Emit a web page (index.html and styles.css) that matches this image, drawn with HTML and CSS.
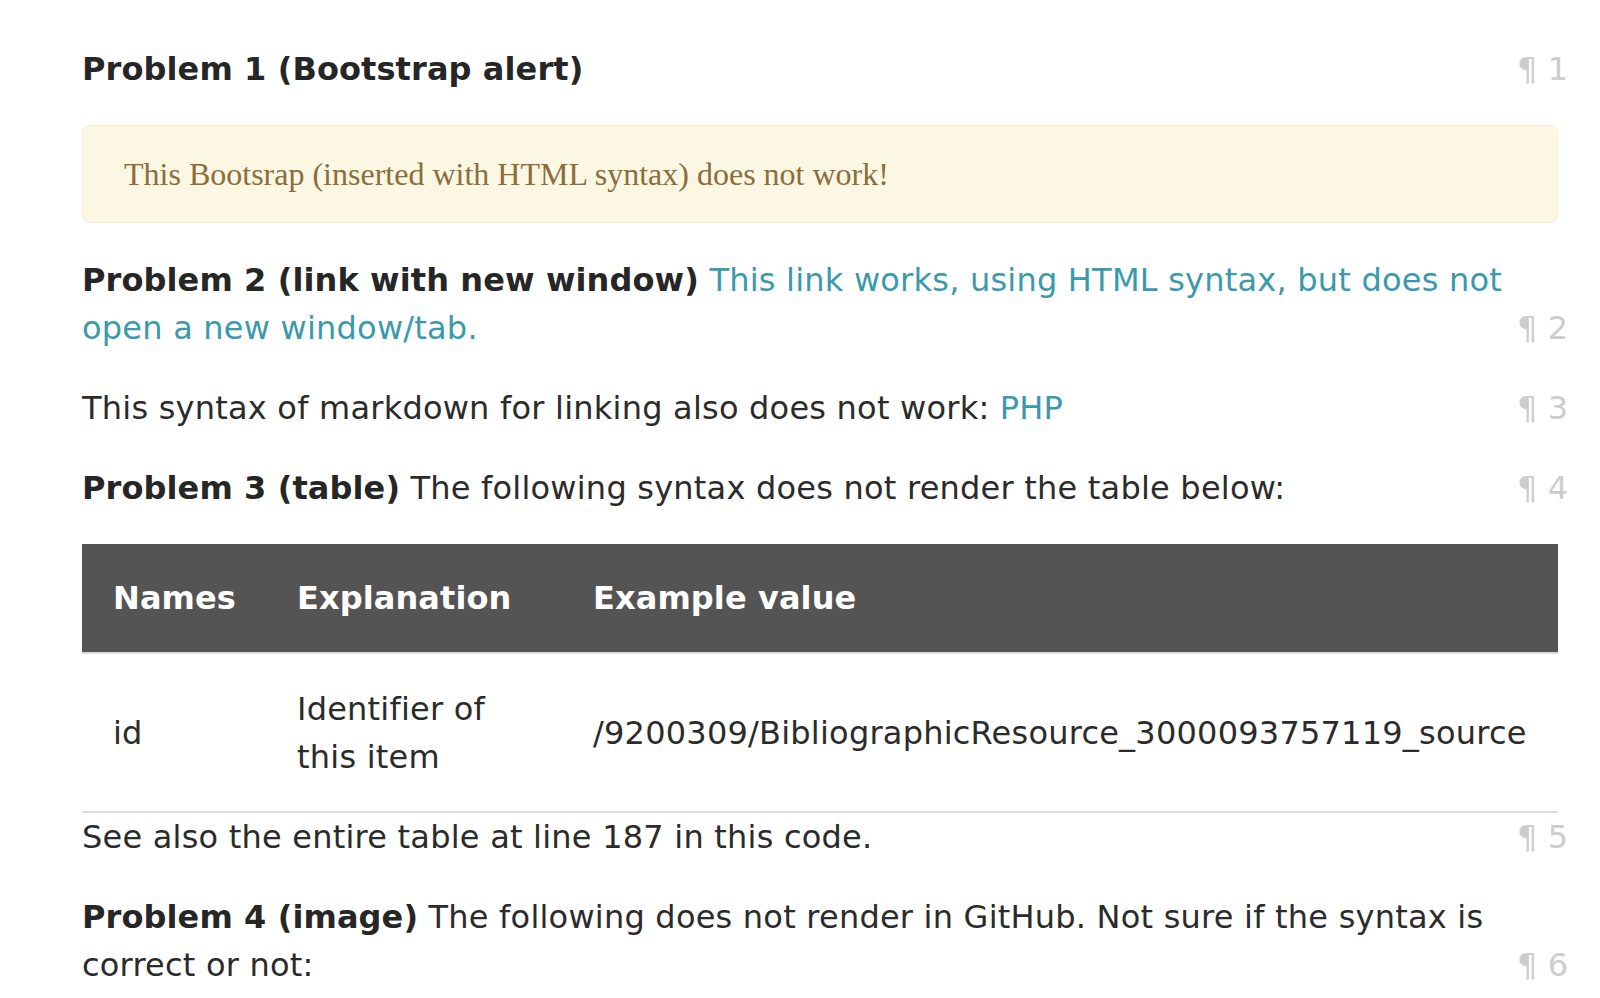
FILE: index.html
```html
<!DOCTYPE html>
<html lang="en">
<head>
  <meta charset="UTF-8">
  <meta name="viewport" content="width=device-width, initial-scale=1.0">
  <title>Problems</title>
  <link rel="stylesheet" href="styles.css">
</head>
<body>
  <div class="conteudo">
    <p class="par"><strong>Problem 1 (Bootstrap alert)</strong><span class="pilcrow">¶ 1</span></p>

    <div class="alerta">This Bootsrap (inserted with HTML syntax) does not work!</div>

    <p class="par"><strong>Problem 2 (link with new window)</strong> <a href="#">This link works, using HTML syntax, but does not open a new window/tab.</a><span class="pilcrow">¶ 2</span></p>

    <p class="par">This syntax of markdown for linking also does not work: <a href="#">PHP</a><span class="pilcrow">¶ 3</span></p>

    <p class="par"><strong>Problem 3 (table)</strong> The following syntax does not render the table below:<span class="pilcrow">¶ 4</span></p>

    <!-- Tabela -->
    <table class="tabela">
      <colgroup>
        <col class="col-nome">
        <col class="col-expl">
        <col>
      </colgroup>
      <thead>
        <tr>
          <th>Names</th>
          <th>Explanation</th>
          <th>Example value</th>
        </tr>
      </thead>
      <tbody>
        <tr>
          <td>id</td>
          <td>Identifier of this item</td>
          <td>/9200309/BibliographicResource_3000093757119_source</td>
        </tr>
      </tbody>
    </table>

    <p class="par">See also the entire table at line 187 in this code.<span class="pilcrow">¶ 5</span></p>

    <p class="par"><strong>Problem 4 (image)</strong> The following does not render in GitHub. Not sure if the syntax is correct or not:<span class="pilcrow">¶ 6</span></p>
  </div>
</body>
</html>
```

FILE: styles.css
```css
body {
  margin: 0;
  background-color: white;
  color: #2b2b2b;
  font-family: "DejaVu Sans", Verdana, sans-serif;
  font-size: 32px;
  line-height: 48px;
  letter-spacing: 0.22px;
}
.conteudo {
  width: 1476px;
  padding: 45px 0 0 82px;
}
.par {
  position: relative;
  margin: 0 0 32px 0;
}
.par strong {
  color: #262626;
  letter-spacing: 0.1px;
}
.par a {
  color: #3a9aab;
  text-decoration: none;
}
.pilcrow {
  position: absolute;
  right: -10px;
  bottom: 0;
  color: #cdcdcd;
  font-weight: normal;
  letter-spacing: 0;
}
.alerta {
  background-color: #fcf7e3;
  border: 1px solid #faeecb;
  border-radius: 8px;
  color: #8a6d3b;
  font-family: "Liberation Serif", "Times New Roman", serif;
  font-size: 32px;
  line-height: 48px;
  letter-spacing: 0;
  padding: 24px 41px;
  margin-bottom: 33px;
}
.tabela {
  width: 100%;
  border-collapse: collapse;
  table-layout: fixed;
}
.col-nome {
  width: 184px;
}
.col-expl {
  width: 296px;
}
.tabela th, .tabela td {
  text-align: left;
  vertical-align: middle;
  padding: 30px 31px;
  border-bottom: 2px solid #dcdcdc;
}
.tabela th {
  background-color: #545454;
  color: white;
  font-weight: bold;
  letter-spacing: 0.1px;
}
.tabela td {
  padding-top: 31px;
  padding-bottom: 30px;
}
```
